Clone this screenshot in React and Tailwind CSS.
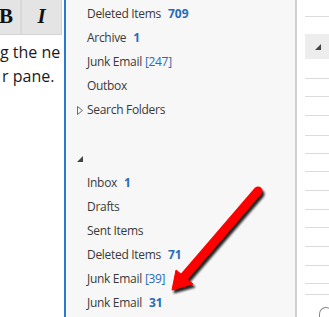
import React from "react";

const topFolders = [
  { name: "Deleted Items", count: "709" },
  { name: "Archive", count: "1" },
  { name: "Junk Email", bracket: "[247]" },
  { name: "Outbox" },
];

const mailFolders = [
  { name: "Inbox", count: "1" },
  { name: "Drafts" },
  { name: "Sent Items" },
  { name: "Deleted Items", count: "71" },
  { name: "Junk Email", bracket: "[39]" },
  { name: "Junk Email", count: "31" },
];

// heights of the message list rows on the far right (border at the bottom of each)
const listRows = ["h-[20px]", "h-[19px]", "h-[19px]", "h-[20px]", "h-[19px]", "h-[18px]", "h-[19px]", "h-[19px]", "h-[19px]", "h-[19px]", "h-[19px]", "h-[19px]", "h-[11px]"];

function Folder({ name, count, bracket }) {
  return (
    <div className="flex h-[24px] items-center gap-[7px] pl-[21px] whitespace-nowrap">
      <span>{name}</span>
      {count && <span className="font-bold tracking-normal text-[#2a6bb6]">{count}</span>}
      {bracket && <span className="-ml-[4px] text-[#2a6bb6]">{bracket}</span>}
    </div>
  );
}

function Arrow() {
  return (
    <svg className="pointer-events-none absolute left-0 top-0" width="329" height="317" viewBox="0 0 329 317">
      <defs>
        <filter id="blur" x="-20%" y="-20%" width="140%" height="140%">
          <feGaussianBlur stdDeviation="1.2" />
        </filter>
      </defs>
      <g transform="translate(2 3)" filter="url(#blur)" fill="#000" stroke="#000" opacity="0.85">
        <line x1="258" y1="191" x2="184" y2="277" strokeWidth="9" strokeLinecap="round" />
        <polygon points="172,290 176,270 193,284" strokeWidth="1" strokeLinejoin="round" />
      </g>
      <g fill="#ff0000" stroke="#ff0000">
        <line x1="258" y1="191" x2="184" y2="277" strokeWidth="9" strokeLinecap="round" />
        <polygon points="172,290 176,270 193,284" strokeWidth="1" strokeLinejoin="round" />
      </g>
    </svg>
  );
}

export default function App() {
  return (
    <div className="relative flex h-[317px] w-[329px] overflow-hidden bg-white font-['Open_Sans',sans-serif]">
      {/* editor pane */}
      <div className="flex w-[64px] shrink-0 flex-col bg-white">
        <div className="flex h-[35px] w-[62px] border-b border-[#d4d4d4] bg-[#e4e4e4]">
          <div className="flex w-[22px] items-center justify-center border-r-2 border-[#d8d8d8] pr-[8px] font-['Liberation_Serif',serif] text-[21px] font-bold text-[#111]">
            B
          </div>
          <div className="flex flex-1 items-center justify-center border-r border-[#d0d0d0] font-['Liberation_Serif',serif] text-[21px] font-bold italic text-[#111]">
            I
          </div>
        </div>
        <div className="mt-[5px] overflow-hidden whitespace-nowrap text-[16px] leading-[24px] text-[#1a1a1a]">
          <div>g the ne</div>
          <div className="pl-[2px]">r pane.</div>
        </div>
      </div>
      <div className="w-[2px] shrink-0 bg-[#2a7bd0]" />

      {/* folder pane */}
      <div className="flex w-[229px] shrink-0 flex-col bg-[#f7f7f7] pt-[2px] text-[12px] tracking-[-0.3px] text-[#3a3a3a]">
        {topFolders.map((f, i) => (
          <Folder key={i} {...f} />
        ))}
        <div className="flex h-[24px] items-center whitespace-nowrap pl-[11px]">
          <svg width="6" height="9" viewBox="0 0 6 9" className="mr-[4px]">
            <polygon points="0.5,0.5 5.5,4.5 0.5,8.5" fill="none" stroke="#6a6a6a" strokeWidth="1" />
          </svg>
          <span>Search Folders</span>
        </div>
        <div className="h-[25px]" />
        <div className="flex h-[24px] items-center pl-[11px]">
          <svg width="6" height="6" viewBox="0 0 6 6">
            <polygon points="6,0 6,6 0,6" fill="#444" />
          </svg>
        </div>
        {mailFolders.map((f, i) => (
          <Folder key={i} {...f} />
        ))}
      </div>
      <div className="w-[2px] shrink-0 bg-[#cfcfcf]" />

      {/* message list */}
      <div className="flex flex-1 flex-col bg-white pl-[8px]">
        <div className="h-[17px] border-b border-[#dcdcdc]" />
        <div className="h-[18px]" />
        <div className="flex h-[25px] items-center bg-[#ededed] pl-[10px]">
          <svg width="6" height="6" viewBox="0 0 6 6">
            <polygon points="6,0 6,6 0,6" fill="#444" />
          </svg>
        </div>
        {listRows.map((h, i) => (
          <div key={i} className={`${h} border-b border-[#dcdcdc]`} />
        ))}
        <div className="mt-[12px] ml-[14px] h-[10px] w-[14px] rounded-t-full border-t border-l border-r border-[#888]" />
      </div>

      <Arrow />
    </div>
  );
}
